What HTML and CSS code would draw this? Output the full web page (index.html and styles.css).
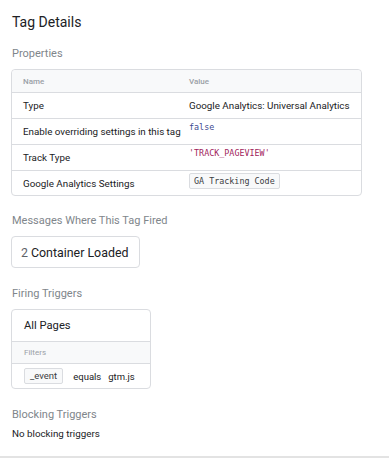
FILE: index.html
```html
<!DOCTYPE html>
<html lang="en">
<head>
    <meta charset="UTF-8">
    <meta name="viewport" content="width=device-width, initial-scale=1.0">
    <title>Tag Details</title>
    <link rel="stylesheet" href="styles.css">
</head>
<body>
    <div class="page">
        <h1 class="title">Tag Details</h1>

        <h2 class="section-title">Properties</h2>
        <div class="card props">
            <div class="props-row props-head">
                <div class="col-name">Name</div>
                <div class="col-value">Value</div>
            </div>
            <div class="props-row">
                <div class="col-name">Type</div>
                <div class="col-value">Google Analytics: Universal Analytics</div>
            </div>
            <div class="props-row">
                <div class="col-name">Enable overriding settings in this tag</div>
                <div class="col-value top"><span class="code code-bool">false</span></div>
            </div>
            <div class="props-row">
                <div class="col-name">Track Type</div>
                <div class="col-value top"><span class="code code-string">'TRACK_PAGEVIEW'</span></div>
            </div>
            <div class="props-row">
                <div class="col-name">Google Analytics Settings</div>
                <div class="col-value top"><span class="code code-var">GA Tracking Code</span></div>
            </div>
        </div>

        <h2 class="section-title">Messages Where This Tag Fired</h2>
        <div class="card message">
            <span class="message-num">2</span>
            <span class="message-name">Container Loaded</span>
        </div>

        <h2 class="section-title">Firing Triggers</h2>
        <div class="card trigger">
            <div class="trigger-name">All Pages</div>
            <div class="trigger-head">Filters</div>
            <div class="trigger-filter">
                <span class="code code-var">_event</span>
                <span class="filter-op">equals</span>
                <span class="filter-val">gtm.js</span>
            </div>
        </div>

        <h2 class="section-title">Blocking Triggers</h2>
        <p class="empty">No blocking triggers</p>
    </div>
</body>
</html>
```

FILE: styles.css
```css
body {
    margin: 0;
    font-family: Roboto, "Noto Sans", Arial, sans-serif;
    color: #202124;
    background: #fff;
}

.page {
    box-sizing: border-box;
    height: 458px;
    padding: 12px 11px 0 11px;
    border-bottom: 2px solid #e3e3e3;
}

.title {
    margin: 0 0 0 1px;
    font-size: 14px;
    font-weight: 400;
    line-height: 20px;
}

.section-title {
    margin: 19px 0 8px 1px;
    font-size: 11px;
    font-weight: 400;
    color: #80868b;
    line-height: 14px;
}

.title + .section-title {
    margin-top: 15px;
}

.props + .section-title {
    margin-top: 18px;
}

.card {
    border: 1px solid #dadce0;
    border-radius: 4px;
    background: #fff;
}

.props {
    width: 349px;
}

.props-row {
    display: flex;
    height: 25px;
    border-top: 1px solid #dadce0;
    font-size: 9.8px;
    line-height: 13px;
}

.props-row:first-child {
    border-top: none;
}

.props-row:last-child {
    height: 24px;
}

.props-head {
    height: 22px;
    background: #f8f9fa;
    border-radius: 4px 4px 0 0;
    font-size: 8px;
    font-weight: 500;
    color: #9aa0a6;
}

.col-name {
    width: 166px;
    padding-left: 11px;
    align-self: center;
}

.col-value {
    flex: 1;
    align-self: center;
}

.col-value.top {
    align-self: flex-start;
    padding-top: 1px;
}

.code {
    font-family: "DejaVu Sans Mono", "Liberation Mono", monospace;
    font-size: 8.4px;
}

.code-bool {
    color: #3d4a8f;
}

.code-string {
    color: #a1255c;
}

.code-var {
    display: inline-block;
    padding: 1px 4px;
    border: 1px solid #dadce0;
    background: #f8f9fa;
    border-radius: 2px;
    color: #3c4043;
    line-height: 12px;
}

.props-row:last-child .col-value.top {
    padding-top: 2px;
}

.message {
    display: inline-flex;
    align-items: center;
    gap: 3px;
    height: 30px;
    padding: 0 11px 0 9px;
    font-size: 12.4px;
}

.message-num {
    color: #5f6368;
}

.trigger {
    width: 138px;
}

.trigger-name {
    height: 31px;
    line-height: 31px;
    padding-left: 12px;
    font-size: 11.2px;
}

.trigger-head {
    height: 21px;
    line-height: 21px;
    padding-left: 12px;
    border-top: 1px solid #dadce0;
    background: #f8f9fa;
    font-size: 8px;
    color: #9aa0a6;
}

.trigger-filter {
    display: flex;
    align-items: center;
    gap: 10px;
    height: 24px;
    padding-left: 12px;
    border-top: 1px solid #dadce0;
    font-size: 9.5px;
}

.trigger-filter .code-var {
    font-family: Roboto, "Noto Sans", Arial, sans-serif;
    font-size: 9.5px;
    padding: 1px 5px;
    line-height: 12px;
}

.filter-op {
    margin-right: -3px;
}

.empty {
    margin: -2px 0 0 1px;
    font-size: 9.8px;
}
```
